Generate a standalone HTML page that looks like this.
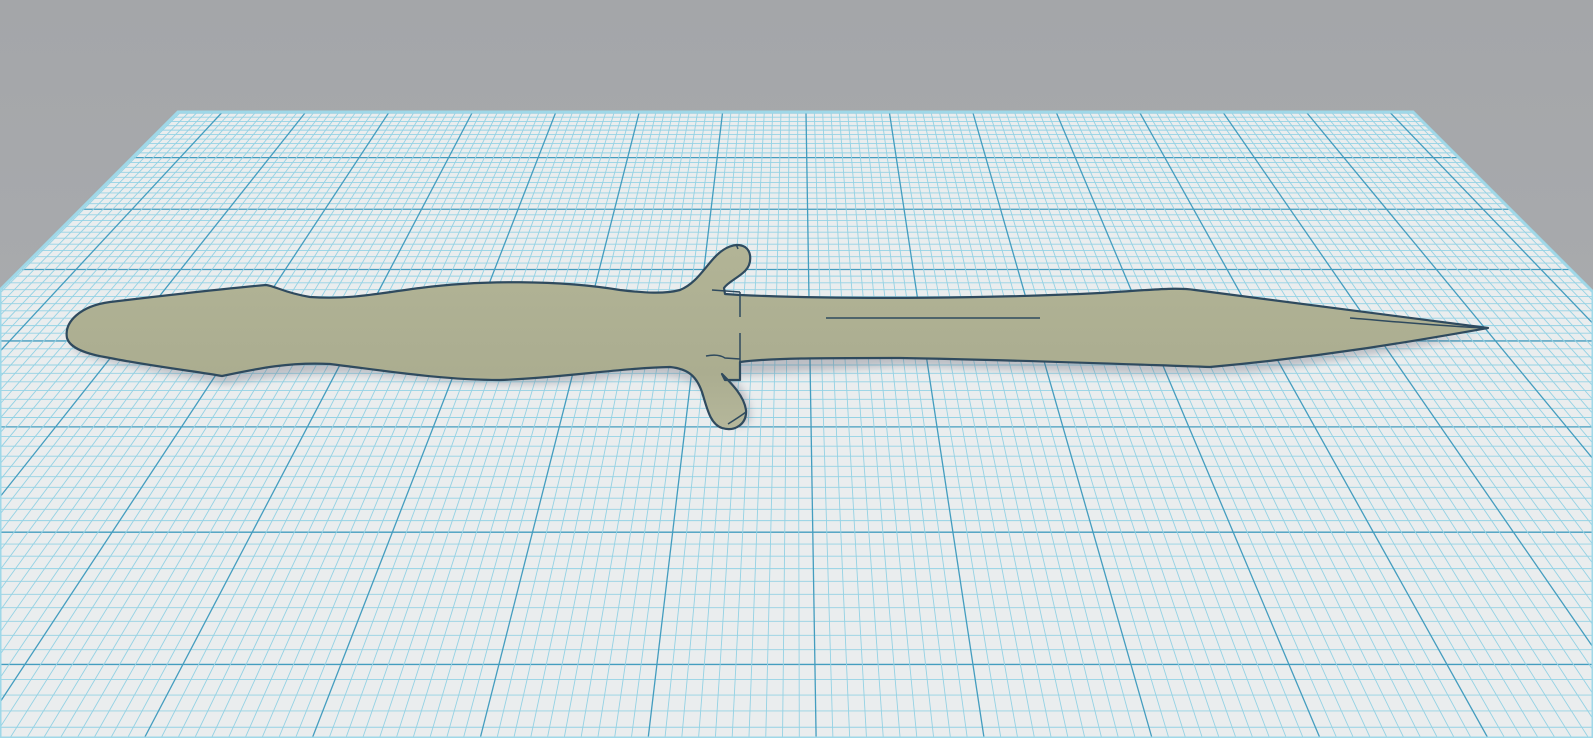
<!DOCTYPE html>
<html><head><meta charset="utf-8"><style>
html,body{margin:0;padding:0;width:1593px;height:738px;overflow:hidden;background:#a7a9ac}
svg{display:block}
</style></head><body>
<svg id="s" width="1593" height="738" viewBox="0 0 1593 738" xmlns="http://www.w3.org/2000/svg">
<defs>
<linearGradient id="bg" x1="0" y1="0" x2="0" y2="1"><stop offset="0" stop-color="#a4a6a9"/><stop offset="1" stop-color="#aeb0b3"/></linearGradient>
<linearGradient id="fill" x1="0" y1="0" x2="0" y2="1"><stop offset="0" stop-color="#b2b496"/><stop offset="0.7" stop-color="#abad90"/><stop offset="1" stop-color="#b5b79b"/></linearGradient>
<filter id="sh" x="-5%" y="-20%" width="110%" height="150%"><feGaussianBlur stdDeviation="4"/></filter>
</defs>
<rect width="1593" height="738" fill="url(#bg)"/>
<polygon points="178,112 1413,112 1593,292 1593,738 0,738 0,290" fill="#eaedee"/>
<g id="grid"></g>
<polygon points="178,112 1413,112 1593,292 1593,738 0,738 0,290" fill="none" stroke="#9fd8e8" stroke-width="3"/>
<g>
<path filter="url(#sh)" opacity="0.3" fill="#556" d="M70,345 C80,360 140,368 225,384 C260,378 300,372 360,374 C440,380 520,392 620,376 C680,372 700,380 712,400 C720,425 745,432 750,420 C752,400 740,385 730,376 L900,366 C1000,368 1150,378 1250,372 C1350,360 1420,345 1480,335 Z"/>
<path fill="url(#fill)" stroke="#2f4a5e" stroke-width="2.2" stroke-linejoin="round" d="
M67,338 C64,322 80,306 110,302 C160,296 230,288 266,285 C275,286 285,293 310,297 C350,300 380,293 420,288 C480,280 560,280 620,290 C645,293 665,294 680,290 C695,284 703,270 714,258 C724,247 736,242 745,247 C752,252 752,264 745,271 C738,278 728,282 724,288 L725,294 L740,295 C850,300 1000,298 1100,293 C1150,290 1175,287 1195,290 C1260,298 1350,310 1488,328 C1420,340 1330,356 1210,367 C1120,364 1020,360 900,358 C820,358 770,358 740,362 L740,380 L725,380 L722,374 C732,384 744,396 746,410 C747,424 735,432 722,428 C710,424 707,408 702,392 C697,378 690,369 670,367 C620,368 560,378 500,380 C440,380 380,370 330,364 C290,362 260,368 222,376 C200,372 150,366 110,358 C85,354 70,348 67,338 Z"/>
<path fill="none" stroke="#2f4a5e" stroke-width="1.5" d="M712,290 L740,292 M740,292 L740,317 M740,333 L740,367 M706,356 C716,354 722,356 725,358 L740,359 M826,318 L1040,318 M1350,318 C1400,322 1440,326 1485,328 M736,244 L738,249 M728,424 C736,419 742,415 746,412"/>
</g>
</svg>
<script>
(function(){
var g=document.getElementById('grid'),ns='http://www.w3.org/2000/svg';
var cx=796,vy=-505,ybot=738;
function line(x1,y1,x2,y2,c,w){var l=document.createElementNS(ns,'line');l.setAttribute('x1',x1);l.setAttribute('y1',y1);l.setAttribute('x2',x2);l.setAttribute('y2',y2);l.setAttribute('stroke',c);l.setAttribute('stroke-width',w);g.appendChild(l);}
function leftX(y){return 178-(y-112);}
function rightX(y){return 1413+(y-112);}
var minC='#94d2e4',majC='#449dbf';
var inv0=1/618,step=0.0000109;
for(var k=0;k<=90;k++){var inv=inv0-step*k;var y=1/inv+vy;if(y>ybot+2)break;
 var maj=(k%10==0);var xl=Math.max(0,leftX(y)),xr=Math.min(1593,rightX(y));
 line(xl,y,xr,y,maj?majC:minC,maj?1.3:0.9);}
for(var n=-120;n<=120;n++){var u=10+8.35*n;
 var sTop=618,sBot=ybot-vy;
 var x1=cx+u,y1=113,x2=cx+u*sBot/sTop,y2=ybot;
 if(x1<178||x1>1413){
   var yy; if(x1<178){ yy=(178+112-cx+u*vy/618)/(1+u/618);} else { yy=(1413-112-cx+u*vy/618)/(u/618-1);}
   if(yy>ybot||yy<112)continue; y1=yy;x1=cx+u*(yy-vy)/618;
 }
 var maj=(((n%10)+10)%10==0);
 line(x1,y1,x2,y2,maj?majC:minC,maj?1.3:0.9);}
})();
</script>
</body></html>
